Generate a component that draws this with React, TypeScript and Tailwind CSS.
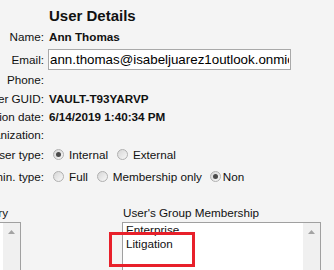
import React from "react";

type RowProps = {
  label: string;
  rowClass: string;
  children?: React.ReactNode;
};

function Row({ label, rowClass, children }: RowProps) {
  return (
    <div className={`flex items-center ${rowClass}`}>
      <div className="flex w-[44px] shrink-0 justify-end">
        <span className="whitespace-nowrap">{label}</span>
      </div>
      {children}
    </div>
  );
}

function Radio({ checked }: { checked?: boolean }) {
  return (
    <span className="flex h-[11px] w-[11px] shrink-0 items-center justify-center rounded-full border border-[#b0b0b0] bg-gradient-to-br from-[#d6d6d6] to-[#f8f8f8]">
      {checked && <span className="h-[5px] w-[5px] rounded-full bg-[#4a4a4a]" />}
    </span>
  );
}

function UpArrow() {
  return (
    <svg width="7" height="4" viewBox="0 0 7 4">
      <polygon points="0,4 3.5,0 7,4" fill="#a3a3a3" />
    </svg>
  );
}

export default function App() {
  return (
    <div className="relative h-[270px] w-[334px] overflow-hidden bg-[#f4f4f4] font-['Liberation_Sans',Arial,sans-serif] text-[11.7px] text-[#111]">
      <div className="mt-[6px] h-[20px] pl-[49px] text-[15px] font-bold leading-[20px]">
        User Details
      </div>

      <Row label="Name:" rowClass="h-[22px]">
        <span className="ml-[5px] font-bold">Ann Thomas</span>
      </Row>
      <Row label="Email:" rowClass="h-[23px]">
        <input
          readOnly
          value="ann.thomas@isabeljuarez1outlook.onmicrosoft.com"
          className="ml-[4px] h-[21px] w-[243px] border border-[#a9a9a9] bg-white px-[1px] text-[13.33px] text-black outline-none"
        />
      </Row>
      <Row label="Phone:" rowClass="h-[18px]" />
      <Row label="User GUID:" rowClass="h-[19px]">
        <span className="ml-[5px] font-bold">VAULT-T93YARVP</span>
      </Row>
      <Row label="Creation date:" rowClass="h-[18px]">
        <span className="ml-[5px] font-bold">6/14/2019 1:40:34 PM</span>
      </Row>
      <Row label="Organization:" rowClass="h-[18px]" />
      <Row label="User type:" rowClass="h-[22px]">
        <div className="ml-[9px] flex items-center">
          <Radio checked />
          <span className="ml-[5px]">Internal</span>
          <span className="ml-[9px]">
            <Radio />
          </span>
          <span className="ml-[5px]">External</span>
        </div>
      </Row>
      <Row label="Admin. type:" rowClass="h-[22px]">
        <div className="ml-[9px] flex items-center">
          <Radio />
          <span className="ml-[5px]">Full</span>
          <span className="ml-[9px]">
            <Radio />
          </span>
          <span className="ml-[5px]">Membership only</span>
          <span className="ml-[8px]">
            <Radio checked />
          </span>
          <span className="ml-[2px]">Non</span>
        </div>
      </Row>

      <div className="mt-[17px] flex">
        <div className="w-[21px] shrink-0">
          <div className="flex h-[15px] justify-end pr-[13px] leading-[15px]">
            <span className="whitespace-nowrap">Available Groups in Directory</span>
          </div>
          <div className="mt-[2px] flex h-[60px] border-t border-r border-[#a0a0a0] bg-white">
            <div className="ml-auto w-[17px] bg-[#f0f0f0]">
              <div className="flex h-[17px] items-center justify-center">
                <UpArrow />
              </div>
            </div>
          </div>
        </div>

        <div className="ml-[101px] w-[199px] shrink-0">
          <div className="h-[15px] pl-[1px] leading-[15px] whitespace-nowrap">
            User's Group Membership
          </div>
          <div className="mt-[2px] flex h-[60px] border border-[#a0a0a0] bg-white">
            <div className="flex-1 pl-[3px] leading-[14px]">
              <div>Enterprise</div>
              <div>Litigation</div>
            </div>
            <div className="w-[17px] bg-[#f0f0f0]">
              <div className="flex h-[17px] items-center justify-center">
                <UpArrow />
              </div>
            </div>
          </div>
        </div>
      </div>

      {/* annotation box */}
      <div className="absolute left-[109px] top-[232px] h-[35px] w-[86px] border-[3px] border-[#e8202a]" />
    </div>
  );
}
